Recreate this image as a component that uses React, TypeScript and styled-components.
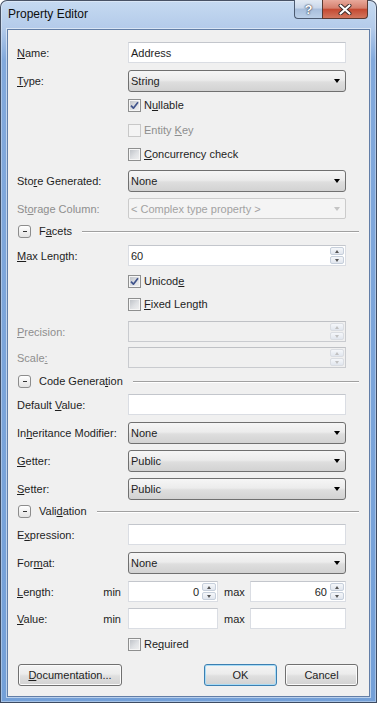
import * as React from 'react';
import styled, { createGlobalStyle, css } from 'styled-components';

const GlobalStyle = createGlobalStyle`
  html, body {
    margin: 0;
    padding: 0;
    background: #ffffff;
  }
  body {
    font-family: "Segoe UI", "Liberation Sans", Arial, sans-serif;
    font-size: 11px;
    color: #1e1e1e;
  }
`;

const Window = styled.div`
  width: 377px;
  height: 703px;
  box-sizing: border-box;
  display: flex;
  flex-direction: column;
  padding: 0 7px 6px 7px;
  border-radius: 7px 7px 0 0;
  background: linear-gradient(
    to bottom,
    #c6daf1 0px,
    #b4cbea 28px,
    #82a9dc 60px,
    #74a0d8 100%
  );
  box-shadow: inset 0 0 0 1px rgba(35, 45, 65, 0.8),
    inset 0 0 0 2px rgba(255, 255, 255, 0.35);
`;

const TitleBar = styled.div`
  height: 29px;
  display: flex;
  align-items: flex-start;
  flex-shrink: 0;
`;

const Title = styled.div`
  margin-left: 1px;
  line-height: 29px;
  font-size: 12px;
  color: #0e0e0e;
  flex: 1;
`;

const CaptionButtons = styled.div`
  display: flex;
  margin-right: 2px;
`;

const CaptionButton = styled.div<{ $kind: 'help' | 'close' }>`
  height: 19px;
  box-sizing: border-box;
  display: flex;
  align-items: center;
  justify-content: center;
  border: 1px solid #4c5a70;
  border-top: none;
  color: #fff;
  font-weight: bold;
  font-size: 13px;
  text-shadow: 0 0 2px #2a3448, 0 0 1px #2a3448;
  ${(p) =>
    p.$kind === 'help'
      ? css`
          width: 28px;
          border-right: none;
          border-bottom-left-radius: 4px;
          background: linear-gradient(
            to bottom,
            #e2eaf4 0%,
            #c9d7ea 45%,
            #a8bedb 50%,
            #bcd0e8 100%
          );
        `
      : css`
          width: 46px;
          border-color: #5a3a32;
          border-bottom-right-radius: 4px;
          background: linear-gradient(
            to bottom,
            #e8a99b 0%,
            #d57f6d 45%,
            #c54a32 52%,
            #d2765e 100%
          );
        `}
`;

const Client = styled.div`
  flex: 1;
  box-sizing: border-box;
  background: #f0f0f0;
  border: 1px solid #627ea7;
  box-shadow: 0 0 0 1px rgba(255, 255, 255, 0.5);
  padding: 12px 10px 0 9px;
  display: flex;
  flex-direction: column;
`;

const Row = styled.div<{ $gap: number }>`
  display: grid;
  grid-template-columns: 111px 218px;
  align-items: center;
  margin-top: ${(p) => p.$gap}px;
`;

const Label = styled.span<{ $disabled?: boolean }>`
  line-height: 16px;
  white-space: nowrap;
  color: ${(p) => (p.$disabled ? '#8e8e8e' : '#1e1e1e')};
`;

const LabelCell = styled.div`
  display: flex;
  justify-content: space-between;
  padding-right: 7px;
`;

const Mn = styled.span`
  text-decoration: underline;
`;

const TextBox = styled.div<{
  $disabled?: boolean;
  $align?: 'left' | 'right';
  $width?: number;
}>`
  height: 21px;
  box-sizing: border-box;
  display: flex;
  align-items: center;
  border: 1px solid ${(p) => (p.$disabled ? '#c9cbcf' : '#dadde3')};
  border-top-color: ${(p) => (p.$disabled ? '#bfc1c5' : '#c3c6cc')};
  background: ${(p) => (p.$disabled ? '#f0f0f0' : '#ffffff')};
  padding-left: 2px;
  min-width: 0;
  flex: ${(p) => (p.$width ? `0 0 ${p.$width}px` : '1')};
  .value {
    flex: 1;
    text-align: ${(p) => (p.$align === 'right' ? 'right' : 'left')};
    padding-right: ${(p) => (p.$align === 'right' ? '3px' : '0')};
  }
`;

const Spin = styled.div<{ $disabled?: boolean }>`
  width: 14px;
  height: 17px;
  margin-right: 1px;
  display: flex;
  flex-direction: column;
  gap: 1px;
  > span {
    flex: 1;
    display: flex;
    align-items: center;
    justify-content: center;
    border: 1px solid ${(p) => (p.$disabled ? '#dadde2' : '#c6cfdb')};
    border-radius: 2px;
    background: linear-gradient(to bottom, #f5f7fa, #e1e6ee);
  }
  > span::after {
    content: '';
    border-left: 2.5px solid transparent;
    border-right: 2.5px solid transparent;
  }
  > span.up::after {
    border-bottom: 3px solid ${(p) => (p.$disabled ? '#c0c0c0' : '#565656')};
  }
  > span.down::after {
    border-top: 3px solid ${(p) => (p.$disabled ? '#c0c0c0' : '#565656')};
  }
`;

const Combo = styled.div<{ $disabled?: boolean }>`
  box-sizing: border-box;
  display: flex;
  align-items: center;
  justify-content: space-between;
  padding-left: 2px;
  padding-right: 5px;
  ${(p) =>
    p.$disabled
      ? css`
          height: 21px;
          border: 1px solid #cbcbcb;
          border-radius: 2px;
          background: #f4f4f4;
          color: #a2a2a2;
        `
      : css`
          height: 22px;
          border: 1px solid #707070;
          border-radius: 3px;
          background: linear-gradient(
            to bottom,
            #f6f6f6 0%,
            #ececec 45%,
            #dedede 55%,
            #d2d2d2 100%
          );
        `}
  &::after {
    content: '';
    border-left: 3.5px solid transparent;
    border-right: 3.5px solid transparent;
    border-top: 4px solid ${(p) => (p.$disabled ? '#c4c4c4' : '#000000')};
  }
`;

const CheckLine = styled.div`
  display: flex;
  align-items: center;
  gap: 3px;
  height: 16px;
`;

const CheckBox = styled.span<{ $disabled?: boolean }>`
  width: 13px;
  height: 13px;
  box-sizing: border-box;
  display: flex;
  align-items: center;
  justify-content: center;
  border: 1px solid ${(p) => (p.$disabled ? '#c8c8c8' : '#8e8f8f')};
  box-shadow: inset 0 0 0 1px ${(p) => (p.$disabled ? '#f4f4f4' : '#f6f6f6')};
  background: ${(p) =>
    p.$disabled
      ? '#f4f4f4'
      : 'linear-gradient(135deg, #b9bdc3 0%, #dfe1e4 55%, #f2f2f2 100%)'};
`;

const SectionHeader = styled.div<{ $gap: number }>`
  display: flex;
  align-items: center;
  height: 14px;
  margin-top: ${(p) => p.$gap}px;
  padding-left: 1px;
`;

const Expander = styled.span`
  width: 13px;
  height: 13px;
  box-sizing: border-box;
  display: flex;
  align-items: center;
  justify-content: center;
  border: 1px solid #8c8c8c;
  border-radius: 3px;
  background: linear-gradient(to bottom, #ffffff, #e2e2e2);
  &::after {
    content: '';
    width: 4px;
    height: 1px;
    background: #333;
  }
`;

const SectionTitle = styled.span`
  margin-left: 8px;
  line-height: 16px;
`;

const Rule = styled.span`
  flex: 1;
  height: 1px;
  margin-left: 10px;
  background: #a0a0a0;
  box-shadow: 0 1px 0 #ffffff;
`;

const Pair = styled.div`
  display: flex;
  align-items: center;
`;

const MaxLabel = styled.span`
  flex: 0 0 32px;
  padding-left: 6px;
  box-sizing: border-box;
`;

const ButtonBar = styled.div`
  display: flex;
  align-items: center;
  margin-top: 12px;
  padding-left: 1px;
  padding-right: 1px;
  gap: 8px;
`;

const Button = styled.div<{ $width: number; $default?: boolean }>`
  width: ${(p) => p.$width}px;
  height: 22px;
  box-sizing: border-box;
  display: flex;
  align-items: center;
  justify-content: center;
  border-radius: 3px;
  border: 1px solid ${(p) => (p.$default ? '#3c7fb1' : '#707070')};
  box-shadow: inset 0 0 0 1px ${(p) => (p.$default ? '#a9dcf6' : '#fbfbfb')};
  background: linear-gradient(
    to bottom,
    #f4f4f4 0%,
    #ececec 45%,
    #dfdfdf 55%,
    #d2d2d2 100%
  );
`;

const Spacer = styled.span`
  flex: 1;
`;

const Check = () => (
  <svg width="9" height="9" viewBox="0 0 9 9">
    <path
      d="M1 4.6 L3.4 7.2 L8 1.2"
      fill="none"
      stroke="#40548c"
      strokeWidth="1.7"
      strokeLinejoin="round"
    />
  </svg>
);

const CloseGlyph = () => (
  <svg width="14" height="11" viewBox="0 0 14 11">
    <path
      d="M2.5 1.5 L11.5 9.5 M11.5 1.5 L2.5 9.5"
      stroke="#3a2a28"
      strokeWidth="4"
      strokeLinecap="round"
    />
    <path
      d="M2.5 1.5 L11.5 9.5 M11.5 1.5 L2.5 9.5"
      stroke="#ffffff"
      strokeWidth="2.2"
      strokeLinecap="round"
    />
  </svg>
);

interface CheckRowProps {
  gap: number;
  checked?: boolean;
  disabled?: boolean;
  children: React.ReactNode;
}

const CheckRow = ({ gap, checked, disabled, children }: CheckRowProps) => (
  <Row $gap={gap}>
    <span />
    <CheckLine>
      <CheckBox $disabled={disabled}>{checked && <Check />}</CheckBox>
      <Label $disabled={disabled}>{children}</Label>
    </CheckLine>
  </Row>
);

const Numeric = ({
  value,
  disabled,
  align,
  width,
}: {
  value?: string;
  disabled?: boolean;
  align?: 'left' | 'right';
  width?: number;
}) => (
  <TextBox $disabled={disabled} $align={align} $width={width}>
    <span className="value">{value}</span>
    <Spin $disabled={disabled}>
      <span className="up" />
      <span className="down" />
    </Spin>
  </TextBox>
);

export default function App() {
  return (
    <>
      <GlobalStyle />
      <Window>
        <TitleBar>
          <Title>Property Editor</Title>
          <CaptionButtons>
            <CaptionButton $kind="help">?</CaptionButton>
            <CaptionButton $kind="close">
              <CloseGlyph />
            </CaptionButton>
          </CaptionButtons>
        </TitleBar>
        <Client>
          <Row $gap={0}>
            <Label>
              <Mn>N</Mn>ame:
            </Label>
            <TextBox>Address</TextBox>
          </Row>
          <Row $gap={7}>
            <Label>
              <Mn>T</Mn>ype:
            </Label>
            <Combo>String</Combo>
          </Row>
          <CheckRow gap={5} checked>
            N<Mn>u</Mn>llable
          </CheckRow>
          <CheckRow gap={9} disabled>
            Entity <Mn>K</Mn>ey
          </CheckRow>
          <CheckRow gap={8}>
            <Mn>C</Mn>oncurrency check
          </CheckRow>
          <Row $gap={8}>
            <Label>
              Sto<Mn>r</Mn>e Generated:
            </Label>
            <Combo>None</Combo>
          </Row>
          <Row $gap={6}>
            <Label $disabled>
              St<Mn>o</Mn>rage Column:
            </Label>
            <Combo $disabled>&lt; Complex type property &gt;</Combo>
          </Row>

          <SectionHeader $gap={5}>
            <Expander />
            <SectionTitle>
              F<Mn>a</Mn>cets
            </SectionTitle>
            <Rule />
          </SectionHeader>
          <Row $gap={7}>
            <Label>
              <Mn>M</Mn>ax Length:
            </Label>
            <Numeric value="60" />
          </Row>
          <CheckRow gap={7} checked>
            Unicod<Mn>e</Mn>
          </CheckRow>
          <CheckRow gap={7}>
            <Mn>F</Mn>ixed Length
          </CheckRow>
          <Row $gap={9}>
            <Label $disabled>
              <Mn>P</Mn>recision:
            </Label>
            <Numeric disabled />
          </Row>
          <Row $gap={5}>
            <Label $disabled>
              Scale<Mn>:</Mn>
            </Label>
            <Numeric disabled />
          </Row>

          <SectionHeader $gap={6}>
            <Expander />
            <SectionTitle>
              Code Genera<Mn>t</Mn>ion
            </SectionTitle>
            <Rule />
          </SectionHeader>
          <Row $gap={6}>
            <Label>
              Default <Mn>V</Mn>alue:
            </Label>
            <TextBox />
          </Row>
          <Row $gap={7}>
            <Label>
              In<Mn>h</Mn>eritance Modifier:
            </Label>
            <Combo>None</Combo>
          </Row>
          <Row $gap={6}>
            <Label>
              <Mn>G</Mn>etter:
            </Label>
            <Combo>Public</Combo>
          </Row>
          <Row $gap={6}>
            <Label>
              <Mn>S</Mn>etter:
            </Label>
            <Combo>Public</Combo>
          </Row>

          <SectionHeader $gap={4}>
            <Expander />
            <SectionTitle>
              Vali<Mn>d</Mn>ation
            </SectionTitle>
            <Rule />
          </SectionHeader>
          <Row $gap={6}>
            <Label>
              E<Mn>x</Mn>pression:
            </Label>
            <TextBox />
          </Row>
          <Row $gap={7}>
            <Label>
              For<Mn>m</Mn>at:
            </Label>
            <Combo>None</Combo>
          </Row>
          <Row $gap={7}>
            <LabelCell>
              <Label>
                <Mn>L</Mn>ength:
              </Label>
              <Label>min</Label>
            </LabelCell>
            <Pair>
              <Numeric value="0" align="right" width={90} />
              <MaxLabel>max</MaxLabel>
              <Numeric value="60" align="right" />
            </Pair>
          </Row>
          <Row $gap={6}>
            <LabelCell>
              <Label>
                <Mn>V</Mn>alue:
              </Label>
              <Label>min</Label>
            </LabelCell>
            <Pair>
              <TextBox $width={90} />
              <MaxLabel>max</MaxLabel>
              <TextBox />
            </Pair>
          </Row>
          <CheckRow gap={7}>
            Re<Mn>q</Mn>uired
          </CheckRow>

          <ButtonBar>
            <Button $width={104}>
              <span>
                <Mn>D</Mn>ocumentation...
              </span>
            </Button>
            <Spacer />
            <Button $width={73} $default>
              OK
            </Button>
            <Button $width={73}>Cancel</Button>
          </ButtonBar>
        </Client>
      </Window>
    </>
  );
}
